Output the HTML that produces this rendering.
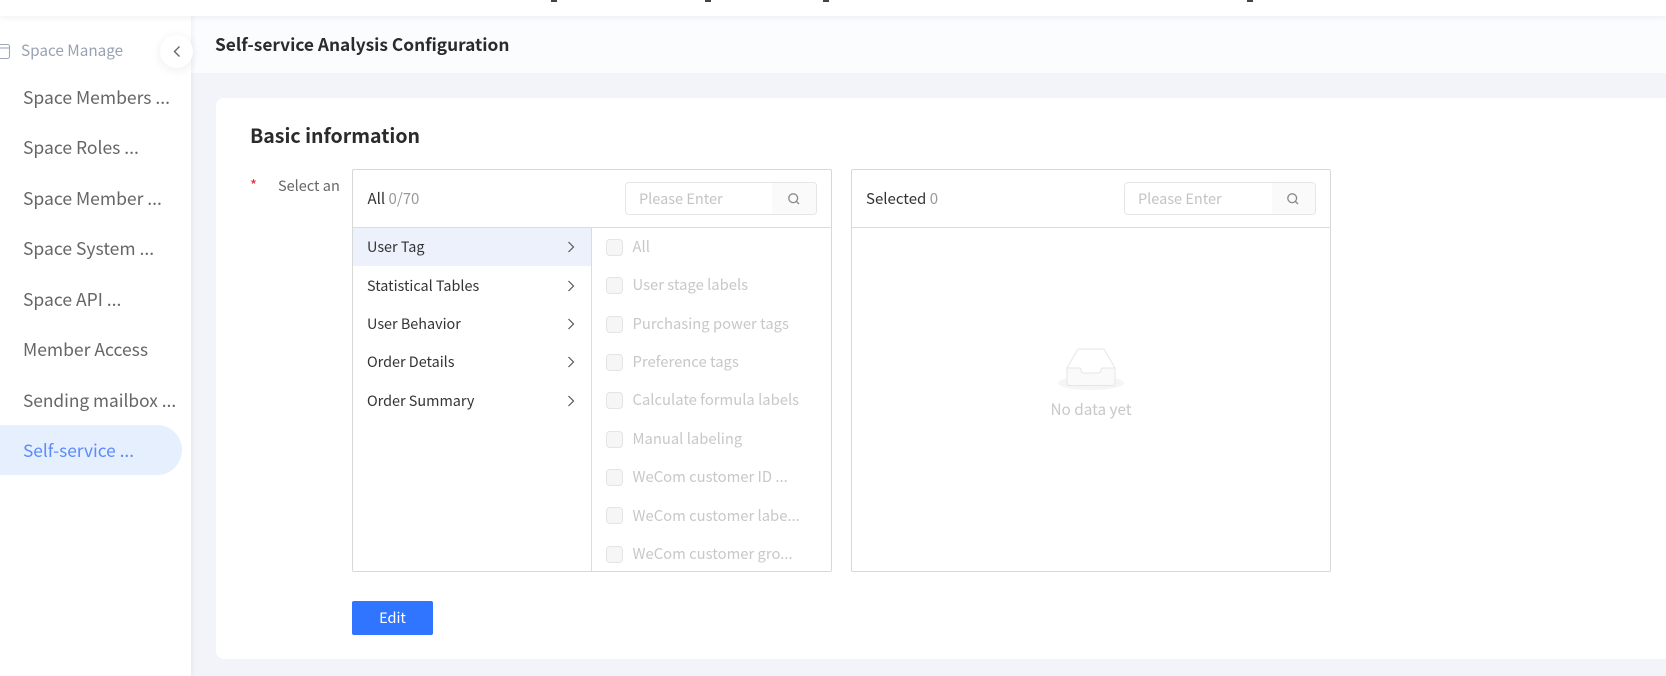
<!DOCTYPE html>
<html lang="en">
<head>
<meta charset="utf-8">
<title>Self-service Analysis Configuration</title>
<style>
html,body{margin:0;padding:0;width:1666px;height:676px;overflow:hidden;background:#f2f4f9;}
body{position:relative;font-family:"Noto Sans CJK SC","Liberation Sans",sans-serif;}
.a{position:absolute;white-space:nowrap;line-height:20px;}
.box{position:absolute;box-sizing:border-box;}
.mi{left:23px;font-size:17.5px;color:#666;height:24px;line-height:24px;}
.li{left:367px;font-size:14.4px;color:#333;}
.ri{left:632.500px;font-size:14.8px;color:#c8c8c8;}
.cb{position:absolute;left:606px;width:17px;height:17px;box-sizing:border-box;background:#f6f6f6;border:1px solid #e4e4e4;border-radius:4px;}
.ch{position:absolute;left:566px;width:10px;height:12px;}
</style>
</head>
<body>
<!-- top bar -->
<div class="box" style="left:0;top:0;width:1666px;height:16px;background:#fff;box-shadow:0 2px 6px rgba(30,40,80,.06);z-index:3;"></div>
<div class="box" style="left:551px;top:0;width:6px;height:2px;background:#444;z-index:4;"></div>
<div class="box" style="left:705px;top:0;width:6px;height:2px;background:#444;z-index:4;"></div>
<div class="box" style="left:823px;top:0;width:6px;height:2px;background:#444;z-index:4;"></div>
<div class="box" style="left:1247px;top:0;width:6px;height:2px;background:#444;z-index:4;"></div>

<!-- sidebar -->
<div class="box" style="left:0;top:0;width:191px;height:676px;background:#fff;box-shadow:1px 0 5px rgba(30,40,80,.07);z-index:2;">
  <svg style="position:absolute;left:-4px;top:43px" width="15" height="17" viewBox="0 0 15 17"><rect x="1" y="1.5" width="12.5" height="14" rx="2" fill="none" stroke="#a0a8b8" stroke-width="1.1"/><path d="M1 5h12.5" stroke="#a0a8b8" stroke-width="1.1"/></svg>
  <div class="a" style="left:21px;top:40px;font-size:15.300px;color:#98a2b3;">Space Manage</div>
  <div class="a mi" style="top:86px;">Space Members ...</div>
  <div class="a mi" style="top:136px;">Space Roles ...</div>
  <div class="a mi" style="top:187px;">Space Member ...</div>
  <div class="a mi" style="top:237px;">Space System ...</div>
  <div class="a mi" style="top:288px;">Space API ...</div>
  <div class="a mi" style="top:338px;">Member Access</div>
  <div class="a mi" style="top:388px;font-size:17.300px;">Sending mailbox ...</div>
  <div class="box" style="left:0;top:425px;width:182px;height:50px;background:#e6effe;border-radius:0 25px 25px 0;"></div>
  <div class="a mi" style="top:438px;color:#5b8cf8;font-size:17.300px;">Self-service ...</div>
</div>
<div class="box" style="left:160px;top:35px;width:33px;height:33px;border-radius:50%;background:#fff;box-shadow:0 2px 10px rgba(30,40,80,.08);z-index:4;">
  <svg style="position:absolute;left:12px;top:10px" width="10" height="13" viewBox="0 0 10 13"><path d="M7.5 1.5 2.5 6.5 7.5 11.5" fill="none" stroke="#666" stroke-width="1.4"/></svg>
</div>

<!-- title band -->
<div class="box" style="left:191px;top:16px;width:1475px;height:57px;background:#fbfcfe;"></div>
<div class="a" style="left:215px;top:34px;font-size:17.300px;font-weight:700;color:#2b2b2b;line-height:20px;">Self-service Analysis Configuration</div>

<!-- card -->
<div class="box" style="left:216px;top:98px;width:1460px;height:561px;background:#fff;border-radius:8px;"></div>
<div class="a" style="left:250px;top:122px;font-size:19.500px;font-weight:700;color:#2b2b2b;line-height:26px;">Basic information</div>
<div class="a" style="left:250px;top:176px;font-size:15px;color:#f5222d;">*</div>
<div class="a" style="left:278px;top:176px;font-size:14.5px;color:#666;">Select an</div>

<!-- left transfer -->
<div class="box" style="left:352px;top:169px;width:480px;height:403px;border:1px solid #d8d8d8;border-radius:2px;background:#fff;"></div>
<div class="box" style="left:353px;top:227px;width:478px;height:1px;background:#dcdcdc;"></div>
<div class="box" style="left:591px;top:228px;width:1px;height:343px;background:#dcdcdc;"></div>
<div class="box" style="left:353px;top:228px;width:238px;height:38px;background:#edf1fb;"></div>
<div class="a" style="left:367.500px;top:189px;font-size:15px;color:#333;">All <span style="color:#999;">0/70</span></div>
<div class="box" style="left:625px;top:182px;width:192px;height:33px;border:1px solid #e6e6e6;border-radius:4px;overflow:hidden;background:#fff;">
  <div class="box" style="left:146px;top:0;width:45px;height:31px;background:#fafafa;"></div>
  <div class="a" style="left:13px;top:6px;font-size:14.5px;color:#c4c4c4;">Please Enter</div>
  <svg style="position:absolute;left:161px;top:9px" width="14" height="14" viewBox="0 0 14 14"><circle cx="6.2" cy="6.2" r="4.4" fill="none" stroke="#888" stroke-width="1.3"/><path d="M9.5 9.5 12 12" stroke="#888" stroke-width="1.3"/></svg>
</div>

<div class="a li" style="top:237px;">User Tag</div>
<div class="a li" style="top:276px;">Statistical Tables</div>
<div class="a li" style="top:314px;">User Behavior</div>
<div class="a li" style="top:352px;">Order Details</div>
<div class="a li" style="top:391px;">Order Summary</div>
<svg class="ch" style="top:241px" viewBox="0 0 10 12"><path d="M2.5 1 7.5 6 2.5 11" fill="none" stroke="#555" stroke-width="1.2"/></svg>
<svg class="ch" style="top:280px" viewBox="0 0 10 12"><path d="M2.5 1 7.5 6 2.5 11" fill="none" stroke="#555" stroke-width="1.2"/></svg>
<svg class="ch" style="top:318px" viewBox="0 0 10 12"><path d="M2.5 1 7.5 6 2.5 11" fill="none" stroke="#555" stroke-width="1.2"/></svg>
<svg class="ch" style="top:356px" viewBox="0 0 10 12"><path d="M2.5 1 7.5 6 2.5 11" fill="none" stroke="#555" stroke-width="1.2"/></svg>
<svg class="ch" style="top:395px" viewBox="0 0 10 12"><path d="M2.5 1 7.5 6 2.5 11" fill="none" stroke="#555" stroke-width="1.2"/></svg>

<div class="cb" style="top:239px"></div><div class="a ri" style="top:237px;">All</div>
<div class="cb" style="top:277px"></div><div class="a ri" style="top:275px;">User stage labels</div>
<div class="cb" style="top:316px"></div><div class="a ri" style="top:314px;">Purchasing power tags</div>
<div class="cb" style="top:354px"></div><div class="a ri" style="top:352px;">Preference tags</div>
<div class="cb" style="top:392px"></div><div class="a ri" style="top:390px;">Calculate formula labels</div>
<div class="cb" style="top:431px"></div><div class="a ri" style="top:429px;">Manual labeling</div>
<div class="cb" style="top:469px"></div><div class="a ri" style="top:467px;">WeCom customer ID ...</div>
<div class="cb" style="top:507px"></div><div class="a ri" style="top:506px;">WeCom customer labe...</div>
<div class="cb" style="top:546px"></div><div class="a ri" style="top:544px;">WeCom customer gro...</div>

<!-- right transfer -->
<div class="box" style="left:851px;top:169px;width:480px;height:403px;border:1px solid #d8d8d8;border-radius:2px;background:#fff;"></div>
<div class="box" style="left:852px;top:227px;width:478px;height:1px;background:#dcdcdc;"></div>
<div class="a" style="left:866px;top:189px;font-size:15px;color:#333;">Selected <span style="color:#999;">0</span></div>
<div class="box" style="left:1124px;top:182px;width:192px;height:33px;border:1px solid #e6e6e6;border-radius:4px;overflow:hidden;background:#fff;">
  <div class="box" style="left:147px;top:0;width:44px;height:31px;background:#fafafa;"></div>
  <div class="a" style="left:13px;top:6px;font-size:14.5px;color:#c4c4c4;">Please Enter</div>
  <svg style="position:absolute;left:161px;top:9px" width="14" height="14" viewBox="0 0 14 14"><circle cx="6.2" cy="6.2" r="4.4" fill="none" stroke="#888" stroke-width="1.3"/><path d="M9.5 9.5 12 12" stroke="#888" stroke-width="1.3"/></svg>
</div>
<svg style="position:absolute;left:1056px;top:346px" width="70" height="46" viewBox="0 0 70 46">
  <ellipse cx="35" cy="37" rx="33" ry="7" fill="#f5f5f5"/>
  <path d="M11 22 22 3H48L59 22" fill="#fff" stroke="#e6e6e6" stroke-width="1"/>
  <path d="M11 22H24Q25 22 25 24 25 27 28 27H42Q45 27 45 24 45 22 47 22H59V38Q59 39.500 57 39.500H13Q11 39.500 11 38Z" fill="#fafafa" stroke="#e6e6e6" stroke-width="1"/>
</svg>
<div class="a" style="left:1031px;top:399px;width:120px;text-align:center;font-size:15.300px;color:#c8c8c8;">No data yet</div>

<!-- button -->
<div class="box" style="left:352px;top:601px;width:81px;height:34px;background:#3075ff;border-radius:2px;"></div>
<div class="a" style="left:352px;top:608px;width:81px;text-align:center;font-size:14.5px;color:#fff;">Edit</div>
</body>
</html>
